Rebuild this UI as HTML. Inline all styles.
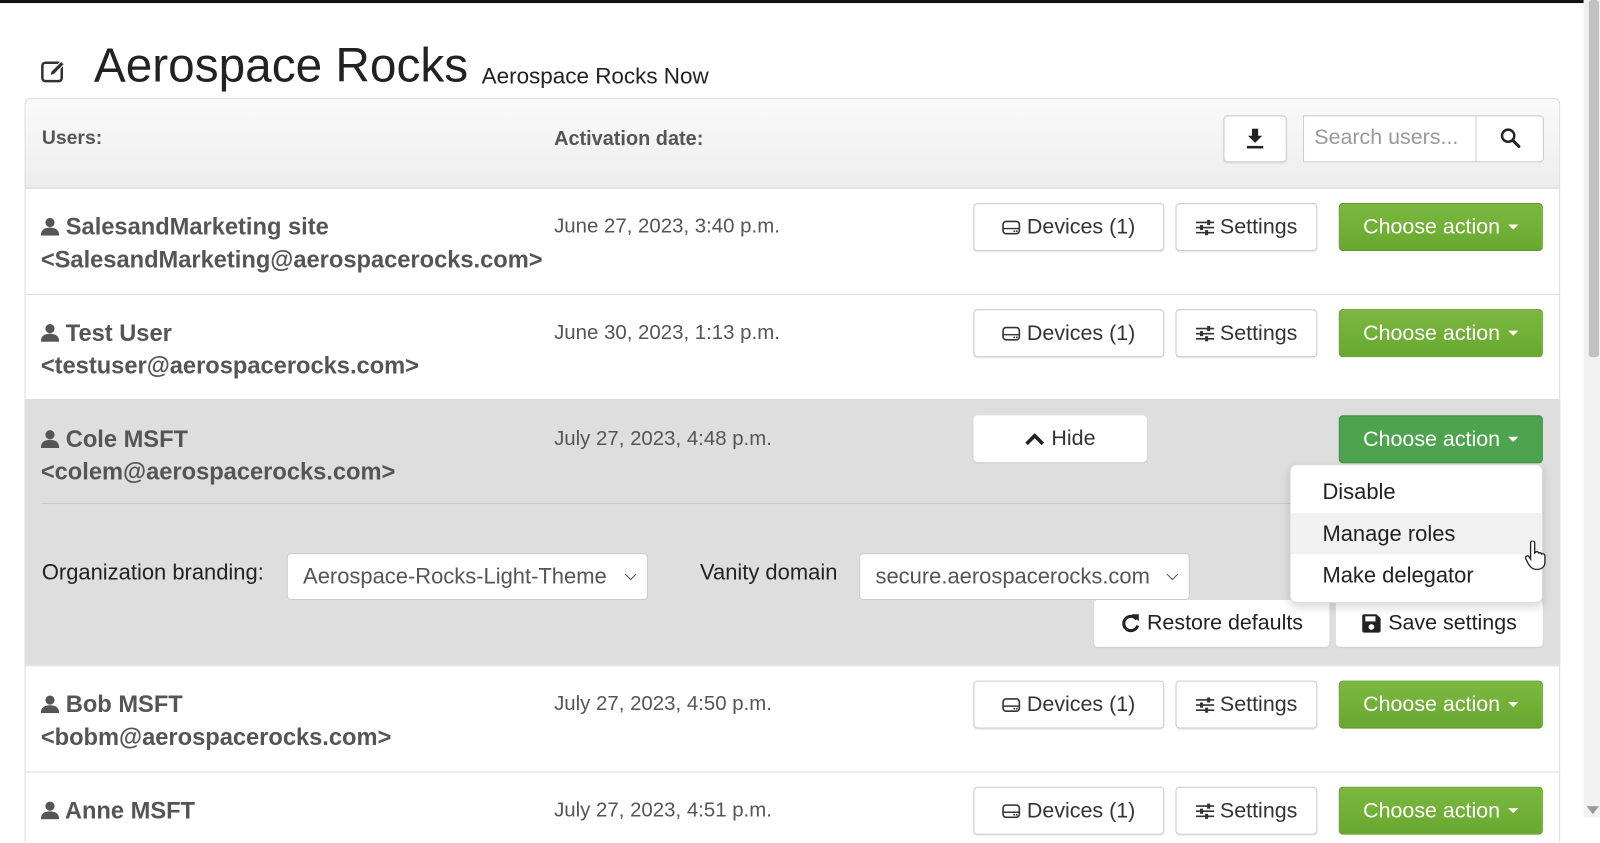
<!DOCTYPE html>
<html><head><style>
*{box-sizing:border-box;margin:0;padding:0}
body{width:1600px;height:817px;overflow:hidden;background:#fff;font-family:"Liberation Sans",Arial,sans-serif;color:#333}
#w{position:absolute;left:0;top:0;width:1568px;height:801px;transform:scale(1.0204);transform-origin:0 0}
.a{position:absolute;white-space:nowrap}
.btn{position:absolute;background:#fff;border:1px solid #ccc;border-radius:4px;font-size:21px;color:#333;display:flex;align-items:center;justify-content:center;gap:6px;box-shadow:0 1px 1px rgba(0,0,0,.08);white-space:nowrap}
.green{position:absolute;background:linear-gradient(#7cb83f,#68a82e);border:1px solid #5e9a2b;border-radius:4px;color:#fff;font-size:21px;display:flex;align-items:center;justify-content:center;gap:8px;white-space:nowrap}
.caret{width:0;height:0;border-left:5px solid transparent;border-right:5px solid transparent;border-top:5px solid #fff}
.name{position:absolute;left:40px;font-size:23.2px;font-weight:bold;color:#555;line-height:32px;white-space:nowrap}
.date{position:absolute;left:543px;font-size:20px;color:#555;white-space:nowrap}
.row{position:absolute;left:24px;width:1505px;border-left:1px solid #ddd;border-right:1px solid #ddd;border-top:1px solid #ddd}
.sel{position:absolute;background:#fff;border:1px solid #ccc;border-radius:4px;font-size:21.5px;color:#555;display:flex;align-items:center;padding-left:15px;white-space:nowrap}
.sel:after{content:"";position:absolute;right:12px;top:16px;width:7px;height:7px;border-right:1.5px solid #555;border-bottom:1.5px solid #555;transform:rotate(45deg)}
</style></head><body><div id="w">
<div class="a" style="left:0;top:0;width:1552px;height:3px;background:#111"></div>
<div class="a" style="left:1552px;top:0;width:16px;height:801px;background:#f1f1f1"></div>
<div class="a" style="left:1557px;top:0;width:10px;height:350px;background:#c1c1c1;border-radius:3px"></div>
<div class="a" style="left:1555px;top:790px;width:0;height:0;border-left:6px solid transparent;border-right:6px solid transparent;border-top:8px solid #999"></div>

<svg class="a" style="left:40px;top:56px" width="28" height="26" viewBox="0 0 28 26"><rect x="1.5" y="5.5" width="19" height="18" rx="3" fill="none" stroke="#333" stroke-width="2.5"/><path d="M9 18l1-4 10-10 3 3-10 10z" fill="#333" stroke="#fff" stroke-width="1"/></svg>
<div class="a" style="left:92px;top:37px;font-size:46.8px;color:#222">Aerospace Rocks</div>
<div class="a" style="left:472px;top:62px;font-size:22px;color:#222">Aerospace Rocks Now</div>

<div class="a" style="left:24px;top:96px;width:1505px;height:88px;border:1px solid #ddd;border-radius:6px 6px 0 0;background:linear-gradient(#fafafa,#ededed)"></div>
<div class="a" style="left:41px;top:125px;font-size:19px;font-weight:bold;color:#555">Users:</div>
<div class="a" style="left:543px;top:125px;font-size:19.5px;font-weight:bold;color:#555">Activation date:</div>
<div class="btn" style="left:1199px;top:113px;width:62px;height:46px"><svg width="18" height="20" viewBox="0 0 18 20"><path d="M6 0h6v7h4l-7 7-7-7h4z" fill="#222"/><rect x="1" y="17" width="16" height="2.5" fill="#222"/></svg></div>
<div class="a" style="left:1277px;top:113px;width:236px;height:46px;border:1px solid #ccc;border-radius:0 4px 4px 0;background:#fff"></div>
<div class="a" style="left:1288px;top:123px;font-size:21px;color:#999">Search users...</div>
<div class="a" style="left:1446px;top:113px;width:1px;height:46px;background:#ccc"></div>
<svg class="a" style="left:1470px;top:125px" width="22" height="22" viewBox="0 0 22 22"><circle cx="8" cy="8" r="6" fill="none" stroke="#222" stroke-width="2.4"/><path d="M12.5 12.5l6 6" stroke="#222" stroke-width="3" stroke-linecap="round"/></svg>

<div class="row" style="top:184px;height:104px;background:#fff"></div>
<div class="row" style="top:288px;height:103px;background:#fff"></div>
<div class="row" style="top:391px;height:261px;background:#dedede"></div>
<div class="row" style="top:652px;height:104px;background:#fff"></div>
<div class="row" style="top:756px;height:70px;background:#fff"></div>

<svg width="0" height="0" style="position:absolute"><defs><symbol id="u" viewBox="0 0 16 16"><circle cx="8" cy="4.5" r="4" fill="#555"/><path d="M0 16c0-5 3-7 8-7s8 2 8 7z" fill="#555"/></symbol>
<symbol id="d" viewBox="0 0 18 14"><rect x="1" y="1" width="16" height="12" rx="3" fill="none" stroke="#333" stroke-width="1.6"/><path d="M1 8h16" stroke="#333" stroke-width="1.4"/><circle cx="12" cy="10.5" r=".9" fill="#333"/><circle cx="14.5" cy="10.5" r=".9" fill="#333"/></symbol>
<symbol id="s" viewBox="0 0 18 16"><path d="M0 3h18M0 8h18M0 13h18" stroke="#333" stroke-width="1.6"/><rect x="11" y="0.5" width="3" height="5" fill="#333"/><rect x="4" y="5.5" width="3" height="5" fill="#333"/><rect x="9" y="10.5" width="3" height="5" fill="#333"/></symbol></defs></svg>

<div class="name" style="top:206px"><svg width="18" height="18" style="vertical-align:-1px"><use href="#u"/></svg> SalesandMarketing site<br>&lt;SalesandMarketing@aerospacerocks.com&gt;</div>
<div class="date" style="top:211px">June 27, 2023, 3:40 p.m.</div>
<div class="btn" style="left:954px;top:199px;width:187px;height:47px"><svg width="18" height="14"><use href="#d"/></svg>Devices (1)</div>
<div class="btn" style="left:1152px;top:199px;width:139px;height:47px"><svg width="18" height="16"><use href="#s"/></svg>Settings</div>
<div class="green" style="left:1312px;top:199px;width:200px;height:47px">Choose action <span class="caret"></span></div>

<div class="name" style="top:310px"><svg width="18" height="18" style="vertical-align:-1px"><use href="#u"/></svg> Test User<br>&lt;testuser@aerospacerocks.com&gt;</div>
<div class="date" style="top:315px">June 30, 2023, 1:13 p.m.</div>
<div class="btn" style="left:954px;top:303px;width:187px;height:47px"><svg width="18" height="14"><use href="#d"/></svg>Devices (1)</div>
<div class="btn" style="left:1152px;top:303px;width:139px;height:47px"><svg width="18" height="16"><use href="#s"/></svg>Settings</div>
<div class="green" style="left:1312px;top:303px;width:200px;height:47px">Choose action <span class="caret"></span></div>

<div class="name" style="top:414px"><svg width="18" height="18" style="vertical-align:-1px"><use href="#u"/></svg> Cole MSFT<br>&lt;colem@aerospacerocks.com&gt;</div>
<div class="date" style="top:419px">July 27, 2023, 4:48 p.m.</div>
<div class="btn" style="left:954px;top:407px;width:170px;height:46px;border-color:#fff"><svg width="20" height="14" viewBox="0 0 20 14"><path d="M2 12L10 4l8 8" fill="none" stroke="#222" stroke-width="3.5"/></svg>Hide</div>
<div class="green" style="left:1312px;top:407px;width:200px;height:47px;background:#4ea34e;border-color:#3f8f3f">Choose action <span class="caret"></span></div>
<div class="a" style="left:40px;top:493px;width:1472px;height:1px;background:#c8c8c8"></div>
<div class="a" style="left:41px;top:549px;font-size:21.5px;color:#222">Organization branding:</div>
<div class="sel" style="left:281px;top:542px;width:354px;height:46px">Aerospace-Rocks-Light-Theme</div>
<div class="a" style="left:686px;top:549px;font-size:21.5px;color:#222">Vanity domain</div>
<div class="sel" style="left:842px;top:542px;width:324px;height:46px">secure.aerospacerocks.com</div>
<div class="btn" style="left:1072px;top:588px;width:231px;height:46px;border-color:#fff;color:#222"><svg width="20" height="20" viewBox="0 0 20 20"><path d="M16 6A7 7 0 1 0 17 12" fill="none" stroke="#222" stroke-width="3"/><path d="M11 1h7v7z" fill="#222"/></svg>Restore defaults</div>
<div class="btn" style="left:1309px;top:588px;width:203px;height:46px;border-color:#fff;color:#222"><svg width="20" height="20" viewBox="0 0 20 20"><path d="M1 3a2 2 0 0 1 2-2h12l4 4v12a2 2 0 0 1-2 2H3a2 2 0 0 1-2-2z" fill="#222"/><rect x="4" y="3" width="10" height="5" fill="#fff"/><circle cx="10" cy="13.5" r="2.8" fill="#fff"/></svg>Save settings</div>

<div class="a" style="left:1264px;top:455px;width:248px;height:136px;background:#fff;border:1px solid #ddd;border-radius:6px;box-shadow:0 4px 10px rgba(0,0,0,.15)"></div>
<div class="a" style="left:1265px;top:503px;width:246px;height:40px;background:#f1f1f1"></div>
<div class="a" style="left:1296px;top:470px;font-size:21.5px;color:#222">Disable</div>
<div class="a" style="left:1296px;top:511px;font-size:21.5px;color:#222">Manage roles</div>
<div class="a" style="left:1296px;top:552px;font-size:21.5px;color:#222">Make delegator</div>
<svg class="a" style="left:1494px;top:530px" width="22" height="30" viewBox="0 0 22 30"><path d="M6 2a2 2 0 0 1 4 0v10l1-1a2 2 0 0 1 3 1 2 2 0 0 1 3 1 2 2 0 0 1 3 2v6c0 4-3 7-7 7h-2c-3 0-5-2-7-5L1 17a2 2 0 0 1 3-2l2 3z" fill="#fff" stroke="#222" stroke-width="1.3"/></svg>

<div class="name" style="top:674px"><svg width="18" height="18" style="vertical-align:-1px"><use href="#u"/></svg> Bob MSFT<br>&lt;bobm@aerospacerocks.com&gt;</div>
<div class="date" style="top:679px">July 27, 2023, 4:50 p.m.</div>
<div class="btn" style="left:954px;top:667px;width:187px;height:47px"><svg width="18" height="14"><use href="#d"/></svg>Devices (1)</div>
<div class="btn" style="left:1152px;top:667px;width:139px;height:47px"><svg width="18" height="16"><use href="#s"/></svg>Settings</div>
<div class="green" style="left:1312px;top:667px;width:200px;height:47px">Choose action <span class="caret"></span></div>

<div class="name" style="top:778px"><svg width="18" height="18" style="vertical-align:-1px"><use href="#u"/></svg> Anne MSFT</div>
<div class="date" style="top:783px">July 27, 2023, 4:51 p.m.</div>
<div class="btn" style="left:954px;top:771px;width:187px;height:47px"><svg width="18" height="14"><use href="#d"/></svg>Devices (1)</div>
<div class="btn" style="left:1152px;top:771px;width:139px;height:47px"><svg width="18" height="16"><use href="#s"/></svg>Settings</div>
<div class="green" style="left:1312px;top:771px;width:200px;height:47px">Choose action <span class="caret"></span></div>
</div></body></html>
